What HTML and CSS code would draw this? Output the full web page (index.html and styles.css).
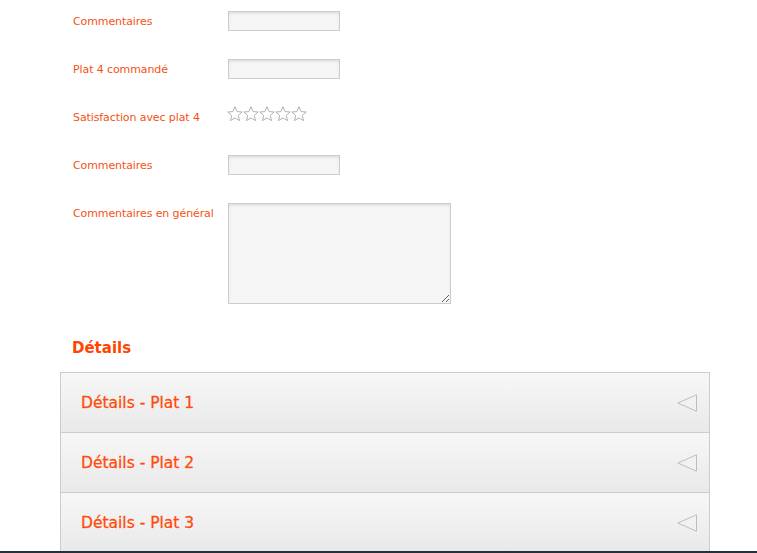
FILE: index.html
```html
<!DOCTYPE html>
<html lang="fr">
<head>
<meta charset="utf-8">
<title>Formulaire</title>
<link rel="stylesheet" href="styles.css">
</head>
<body>
<div class="page">
  <form class="form">
    <div class="row">
      <label class="label">Commentaires</label>
      <input class="field" type="text">
    </div>
    <div class="row">
      <label class="label">Plat 4 commandé</label>
      <input class="field" type="text">
    </div>
    <div class="row">
      <label class="label">Satisfaction avec plat 4</label>
      <div class="stars">
        <svg class="star" viewBox="0 0 16 16"><polygon points="8,0.8 10.1,5.6 15.2,6 11.3,9.4 12.5,14.6 8,11.9 3.5,14.6 4.7,9.4 0.8,6 5.9,5.6"/></svg>
        <svg class="star" viewBox="0 0 16 16"><polygon points="8,0.8 10.1,5.6 15.2,6 11.3,9.4 12.5,14.6 8,11.9 3.5,14.6 4.7,9.4 0.8,6 5.9,5.6"/></svg>
        <svg class="star" viewBox="0 0 16 16"><polygon points="8,0.8 10.1,5.6 15.2,6 11.3,9.4 12.5,14.6 8,11.9 3.5,14.6 4.7,9.4 0.8,6 5.9,5.6"/></svg>
        <svg class="star" viewBox="0 0 16 16"><polygon points="8,0.8 10.1,5.6 15.2,6 11.3,9.4 12.5,14.6 8,11.9 3.5,14.6 4.7,9.4 0.8,6 5.9,5.6"/></svg>
        <svg class="star" viewBox="0 0 16 16"><polygon points="8,0.8 10.1,5.6 15.2,6 11.3,9.4 12.5,14.6 8,11.9 3.5,14.6 4.7,9.4 0.8,6 5.9,5.6"/></svg>
      </div>
    </div>
    <div class="row">
      <label class="label">Commentaires</label>
      <input class="field" type="text">
    </div>
    <div class="row">
      <label class="label">Commentaires en général</label>
      <textarea class="area"></textarea>
    </div>
  </form>

  <h2 class="section-title">Détails</h2>

  <div class="accordion">
    <div class="acc-item">
      <span class="acc-title">Détails - Plat 1</span>
      <svg class="acc-arrow" viewBox="0 0 20 18"><polygon points="19.5,0.8 0.8,9 19.5,17.2"/></svg>
    </div>
    <div class="acc-item">
      <span class="acc-title">Détails - Plat 2</span>
      <svg class="acc-arrow" viewBox="0 0 20 18"><polygon points="19.5,0.8 0.8,9 19.5,17.2"/></svg>
    </div>
    <div class="acc-item">
      <span class="acc-title">Détails - Plat 3</span>
      <svg class="acc-arrow" viewBox="0 0 20 18"><polygon points="19.5,0.8 0.8,9 19.5,17.2"/></svg>
    </div>
  </div>
</div>
<div class="frame-edge"></div>
</body>
</html>
```

FILE: styles.css
```css
html, body {
  margin: 0;
  padding: 0;
  background: #ffffff;
  overflow: hidden;
}

body {
  font-family: "DejaVu Sans", "Liberation Sans", sans-serif;
  color: #ff4a0a;
}

.page {
  width: 757px;
}

.form {
  padding: 11px 0 0 73px;
  margin: 0;
}

.row {
  display: flex;
  align-items: flex-start;
  margin-bottom: 26px;
}

.row:last-child {
  margin-bottom: 0;
}

.label {
  width: 155px;
  flex: none;
  font-size: 11px;
  line-height: 22px;
  letter-spacing: -0.1px;
  color: #f5520f;
}

.field {
  box-sizing: border-box;
  width: 112px;
  height: 20px;
  margin: 0;
  padding: 0 4px;
  border: 1px solid #cccccc;
  background: #f5f5f5;
  box-shadow: inset 0 2px 2px rgba(0, 0, 0, 0.08);
  outline: none;
}

.stars {
  display: flex;
  height: 22px;
  margin-left: -1px;
  margin-top: -1px;
}

.star {
  width: 16px;
  height: 16px;
  display: block;
}

.star polygon {
  fill: #ffffff;
  stroke: #a9a9a9;
  stroke-width: 0.9;
  stroke-linejoin: round;
}

.area {
  box-sizing: border-box;
  width: 223px;
  height: 101px;
  margin: 0;
  padding: 4px;
  border: 1px solid #cccccc;
  background: #f5f5f5;
  box-shadow: inset 0 2px 2px rgba(0, 0, 0, 0.08);
  outline: none;
  font-family: inherit;
}

.section-title {
  margin: 34px 0 14px 72px;
  font-size: 15px;
  line-height: 20px;
  font-weight: bold;
  color: #ff4500;
}

.accordion {
  margin-left: 60px;
  width: 650px;
  box-sizing: border-box;
  border-left: 1px solid #cccccc;
  border-right: 1px solid #cccccc;
}

.acc-item {
  display: flex;
  align-items: center;
  justify-content: space-between;
  height: 59px;
  border-top: 1px solid #cccccc;
  border-bottom: 1px solid #cccccc;
  margin-bottom: -1px;
  padding: 0 12px 0 20px;
  background: linear-gradient(#f7f7f7, #e9e9e9);
}

.acc-title {
  font-size: 15.5px;
  line-height: 20px;
  color: #ff4a0a;
  -webkit-text-stroke: 0.3px #ff4a0a;
  text-shadow: 0 1px 0 #ffffff;
}

.acc-arrow {
  width: 20px;
  height: 18px;
  display: block;
}

.acc-arrow polygon {
  fill: #f1f1f1;
  stroke: #bdbdbd;
  stroke-width: 1;
}

.frame-edge {
  position: fixed;
  left: 0;
  right: 0;
  bottom: 0;
  height: 2px;
  background: #26313a;
}
```
